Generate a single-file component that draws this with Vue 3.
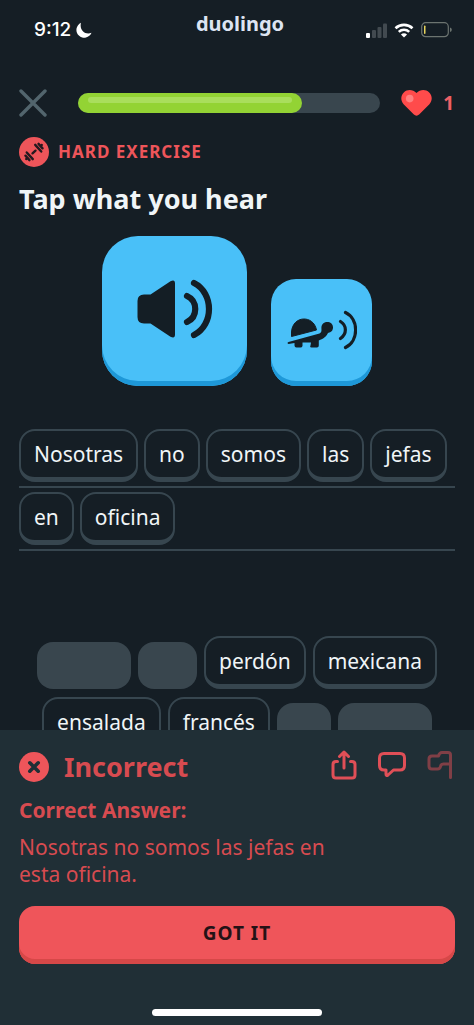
<script setup>
import { ref } from 'vue'

const progress = ref(74)
const hearts = ref(1)

const answerRows = [
  ['Nosotras', 'no', 'somos', 'las', 'jefas'],
  ['en', 'oficina'],
]

const bankRows = [
  [{ blank: 'wide' }, { blank: 'medium' }, { word: 'perdón' }, { word: 'mexicana' }],
  [{ word: 'ensalada' }, { word: 'francés' }, { blank: 'narrow' }, { blank: 'wide' }],
]
</script>

<template>
  <div class="screen">
    <header class="status">
      <div class="clock">
        <span>9:12</span>
        <svg width="16" height="16" viewBox="0 0 16 16" aria-hidden="true">
          <path d="M5 0.800A7.800 7.800 0 1 0 15.500 10.700C9.500 13.500 3 8 5 0.800Z" fill="#fff" />
        </svg>
      </div>
      <div class="logo">duolingo</div>
      <div class="signals">
        <svg width="21" height="15" viewBox="0 0 21 15" aria-hidden="true">
          <rect x="0" y="10" width="4" height="5" rx="1" fill="#fff" />
          <rect x="6" y="7" width="4" height="8" rx="1" fill="#424a50" />
          <rect x="11.500" y="4" width="4" height="11" rx="1" fill="#424a50" />
          <rect x="17" y="0.500" width="4" height="14.500" rx="1" fill="#424a50" />
        </svg>
        <svg width="20" height="15" viewBox="0 0 20 15" aria-hidden="true">
          <path d="M1.500 5.300A12.300 12.300 0 0 1 18.500 5.300M4.800 8.900A7.500 7.500 0 0 1 15.200 8.900" fill="none" stroke="#fff" stroke-width="2.600" />
          <path d="M10 14.500L6.900 11.600A4.500 4.500 0 0 1 13.100 11.600Z" fill="#fff" />
        </svg>
        <svg width="31" height="16" viewBox="0 0 31 16" aria-hidden="true">
          <rect x="0.700" y="0.700" width="26.600" height="14" rx="4" fill="none" stroke="#6c7470" stroke-width="1.200" />
          <rect x="3" y="3.500" width="1.500" height="8.500" rx="0.700" fill="#e8d45c" />
          <path d="M29 5.500Q30.800 6 30.800 7.700T29 10Z" fill="#6c7470" />
        </svg>
      </div>
    </header>

    <main class="lesson">
      <div class="topbar">
        <button class="icon-button" type="button" aria-label="Close">
          <svg width="28" height="28" viewBox="0 0 28 28">
            <path d="M2 2L26 26M26 2L2 26" stroke="#52656d" stroke-width="3.400" stroke-linecap="round" />
          </svg>
        </button>
        <div class="track" role="progressbar" aria-label="Lesson progress" :aria-valuenow="progress">
          <div class="fill" :style="{ width: progress + '%' }"><div class="shine"></div></div>
        </div>
        <div class="hearts">
          <svg width="31" height="26" viewBox="0 0 31 26" aria-hidden="true">
            <path d="M2.600 14.200C-0.700 10.600-0.300 5.200 2.800 2.400C6.500-1 12-0.600 15.500 3.100C19-0.600 24.500-1 28.200 2.400C31.300 5.200 31.700 10.600 28.400 14.200L18.400 24.300Q15.500 27 12.600 24.300Z" fill="#ff4b4b" />
            <circle cx="8.700" cy="8.600" r="3.800" fill="#ff8080" />
          </svg>
          <span>{{ hearts }}</span>
        </div>
      </div>

      <div class="badge">
        <svg width="30" height="30" viewBox="0 0 30 30" aria-hidden="true">
          <circle cx="15" cy="15" r="15" fill="#ee555a" />
          <g transform="rotate(-42 15 15)" stroke="#24191f" stroke-linecap="round" stroke-width="2.400">
            <path d="M13 15H17M4.500 15H5.500M24.500 15H25.500" />
            <path d="M9.300 10.500V19.500M6.200 12V18M20.700 10.500V19.500M23.800 12V18" />
          </g>
        </svg>
        <span>HARD EXERCISE</span>
      </div>

      <h1>Tap what you hear</h1>

      <div class="players">
        <button class="player large" type="button" aria-label="Play audio">
          <svg width="76" height="60" viewBox="0 0 76 60">
            <path d="M7 15.500H13.500L33.500 2.300Q38 0 38 4.500V55.500Q38 60 33.500 57.700L13.500 44.500H7Q0.500 44.500 0.500 38V22Q0.500 15.500 7 15.500Z" fill="#141e25" />
            <path d="M50 17C61 22 61 38 50 43M57 4C77 14 77 46 57 56" fill="none" stroke="#141e25" stroke-width="6.200" stroke-linecap="round" />
          </svg>
        </button>
        <button class="player small" type="button" aria-label="Play slowly">
          <svg width="70" height="40" viewBox="0 0 70 40">
            <path d="M4.500 26.500V22C5.500 5.500 26.500 4.500 29.500 20Z" fill="#141e25" stroke="#141e25" stroke-linejoin="round" />
            <path d="M1.500 32L32.500 23.600C35 22.500 34.400 20.500 34.400 17.500C35 10 46.500 10.500 46 18C45.500 22 42.500 22.500 41 23C38.500 28 34.500 29.500 31.800 30.500V35.500Q31.800 37.500 30 37.500H24.500Q22.500 37.500 23.500 35.500L24 32.500H15.500V36Q15 37.500 13.500 37.500H9.500Q7.500 37.500 7.500 35.500V33L1.500 34Q-0.500 33 1.500 32Z" fill="#141e25" />
            <path d="M53.500 11.500C60 15.500 60 24 53.500 28.500M58.500 2.500C72 9 72 31 58.500 37.500" fill="none" stroke="#141e25" stroke-width="3.200" stroke-linecap="round" />
          </svg>
        </button>
      </div>

      <div class="answer">
        <div v-for="(row, i) in answerRows" :key="i" class="answer-row">
          <button v-for="word in row" :key="word" class="chip" type="button">{{ word }}</button>
        </div>
      </div>

      <div class="bank">
        <div v-for="(row, i) in bankRows" :key="i" class="bank-row">
          <template v-for="(item, j) in row" :key="j">
            <button v-if="item.word" class="chip" type="button">{{ item.word }}</button>
            <span v-else class="blank" :class="item.blank"></span>
          </template>
        </div>
      </div>
    </main>

    <section class="sheet">
      <div class="verdict">
        <svg width="30" height="30" viewBox="0 0 30 30" aria-hidden="true">
          <circle cx="15" cy="15" r="15" fill="#ee555a" />
          <path d="M10.800 10.800L19.200 19.200M19.200 10.800L10.800 19.200" stroke="#202f36" stroke-width="3.600" stroke-linecap="round" />
        </svg>
        <h2>Incorrect</h2>
        <div class="actions">
          <button class="icon-button" type="button" aria-label="Share">
            <svg width="26" height="30" viewBox="0 0 26 30">
              <path d="M13 18V3M8.500 6.500L13 2L17.500 6.500M6.500 11.500H5Q2 11.500 2 14.500V25Q2 28 5 28H21Q24 28 24 25V14.500Q24 11.500 21 11.500H19.500" />
            </svg>
          </button>
          <button class="icon-button" type="button" aria-label="Discuss">
            <svg width="28" height="30" viewBox="0 0 28 30">
              <path d="M6 3.500H22Q26.500 3.500 26.500 8V15.500Q26.500 20 22 20H15.500L10 25Q8 26.500 8 24V20H6Q1.500 20 1.500 15.500V8Q1.500 3.500 6 3.500Z" />
            </svg>
          </button>
          <button class="icon-button faded" type="button" aria-label="Report">
            <svg width="26" height="30" viewBox="0 0 26 30">
              <path d="M23.500 27.500V5Q23.500 2.500 21 2.500H15Q12.500 2.500 11.500 6H5Q2 6 2 9V16Q2 19 5 19H10.500Q13 19 13.500 16.500Q14 14 16.500 14H23" />
            </svg>
          </button>
        </div>
      </div>
      <h3>Correct Answer:</h3>
      <p>Nosotras no somos las jefas en esta oficina.</p>
      <button class="continue" type="button">GOT IT</button>
      <div class="home"></div>
    </section>
  </div>
</template>

<style>
body {
  margin: 0;
  background: #151e25;
}
</style>

<style scoped>
.screen {
  display: flex;
  flex-direction: column;
  height: 100vh;
  overflow: hidden;
  background: #151e25;
  color: #f0f5f7;
  font-family: "Noto Sans", "Open Sans", sans-serif;
}
button {
  font-family: inherit;
  color: inherit;
  cursor: pointer;
}
svg {
  display: block;
  flex: none;
}
.status {
  flex: none;
  display: grid;
  grid-template-columns: 1fr auto 1fr;
  align-items: center;
  height: 60px;
  padding: 0 22px 0 34px;
}
.clock {
  display: flex;
  align-items: center;
  gap: 5px;
  font: 500 19px/24px Inter, sans-serif;
  color: #fff;
}
.logo {
  padding: 0 6px 12px 0;
  font-size: 20px;
  font-weight: 700;
  line-height: 28px;
  color: #dde4f2;
}
.signals {
  display: flex;
  justify-content: flex-end;
  align-items: center;
  gap: 7px;
}
.lesson {
  flex: 1;
  min-height: 0;
  overflow: hidden;
  padding: 29px 19px 0;
}
.topbar {
  display: flex;
  align-items: center;
  height: 28px;
  padding-right: 1px;
}
.icon-button {
  display: block;
  padding: 0;
  border: 0;
  background: none;
}
.track {
  flex: 1;
  height: 20px;
  margin: 0 21px 0 31px;
  border-radius: 10px;
  background: #39464e;
}
.fill {
  box-sizing: border-box;
  height: 20px;
  padding: 4px 10px;
  border-radius: 10px;
  background: #93d334;
}
.shine {
  height: 6px;
  border-radius: 3px;
  background: #a9de5c;
}
.hearts {
  display: flex;
  align-items: center;
  gap: 11px;
  font-size: 19px;
  font-weight: 700;
  line-height: 24px;
  color: #ee6065;
}
.badge {
  display: flex;
  align-items: center;
  gap: 9px;
  margin-top: 20px;
  font-size: 17px;
  font-weight: 700;
  line-height: 24px;
  letter-spacing: 1px;
  color: #ee555a;
}
h1 {
  margin: 14px 0 0;
  font-size: 27px;
  font-weight: 700;
  line-height: 36px;
}
.players {
  display: flex;
  justify-content: center;
  align-items: flex-end;
  gap: 24px;
  margin-top: 19px;
}
.player {
  display: flex;
  align-items: center;
  justify-content: center;
  box-sizing: border-box;
  padding: 0 0 5px;
  border: 0;
  background: #49c0f8;
  box-shadow: inset 0 -5px #1e98d8;
}
.large {
  width: 145px;
  height: 150px;
  border-radius: 36px;
}
.small {
  width: 101px;
  height: 107px;
  border-radius: 25px;
}
.answer {
  margin-top: 43px;
}
.answer-row {
  display: flex;
  gap: 6px;
  height: 57px;
  margin-bottom: 4px;
  border-bottom: 2px solid #37464f;
}
.chip {
  box-sizing: border-box;
  height: 53px;
  padding: 0 13px;
  border: 2px solid #37464f;
  border-bottom-width: 5px;
  border-radius: 16px;
  background: none;
  font-size: 21px;
  line-height: 28px;
  white-space: nowrap;
}
.bank {
  margin-top: 85px;
}
.bank-row {
  display: flex;
  justify-content: center;
  align-items: flex-end;
  gap: 7px;
  margin-bottom: 8px;
}
.blank {
  height: 47px;
  border-radius: 16px;
  background: #39464e;
}
.wide {
  width: 94px;
}
.medium {
  width: 59px;
}
.narrow {
  width: 54px;
}
.sheet {
  flex: none;
  padding: 19px 19px 9px;
  background: #202f36;
  color: #d74b50;
}
.verdict {
  display: flex;
  align-items: center;
  height: 36px;
  gap: 15px;
}
h2 {
  margin: 0;
  font-size: 27px;
  font-weight: 700;
  line-height: 36px;
}
.actions {
  display: flex;
  flex: 1;
  justify-content: flex-end;
  gap: 21px;
  padding: 0 2px 4px 0;
}
.actions path {
  fill: none;
  stroke: #e04f57;
  stroke-width: 3;
  stroke-linecap: round;
  stroke-linejoin: round;
}
.faded {
  opacity: 0.5;
}
h3 {
  margin: 11px 0 0;
  font-size: 21px;
  font-weight: 700;
  line-height: 28px;
}
p {
  max-width: 340px;
  margin: 10px 0 0;
  font-size: 21px;
  line-height: 27px;
}
.continue {
  display: block;
  width: 100%;
  height: 58px;
  margin-top: 18px;
  padding: 0 0 5px;
  border: 0;
  border-radius: 16px;
  background: #ef555a;
  box-shadow: inset 0 -5px #d64848;
  color: #241216;
  font-size: 19px;
  font-weight: 700;
  letter-spacing: 1px;
}
.home {
  width: 170px;
  height: 7px;
  margin: 45px auto 0;
  border-radius: 4px;
  background: #fff;
}
</style>
